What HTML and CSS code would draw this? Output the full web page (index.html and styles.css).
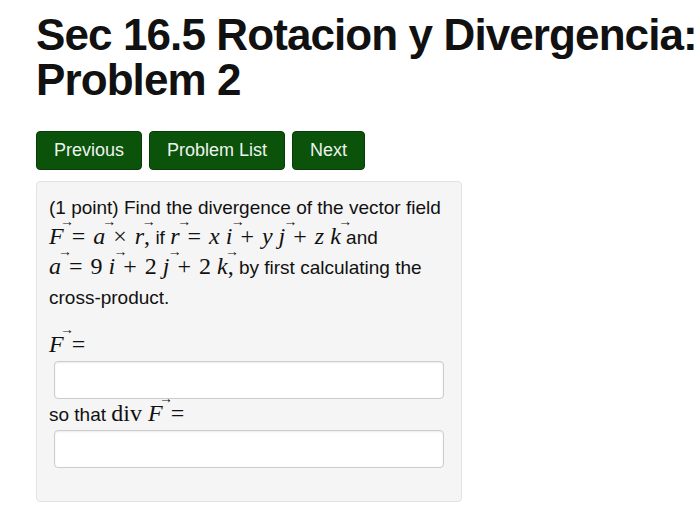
FILE: index.html
```html
<!DOCTYPE html>
<html>
<head>
  <title>Sec 16.5 Rotacion y Divergencia: Problem 2</title>
  <link rel="stylesheet" href="styles.css">
</head>
<body>
  <h1 class="title">Sec 16.5 Rotacion y Divergencia:<br>Problem 2</h1>

  <div class="nav">
    <a class="btn" href="#">Previous</a>
    <a class="btn" href="#">Problem List</a>
    <a class="btn" href="#">Next</a>
  </div>

  <div class="problem">
    <p class="text">(1 point) Find the divergence of the vector field
      <span class="m"><span class="vec">F</span><span class="op">=</span><span class="vec">a</span><span class="op">×</span><span class="vec">r</span>,</span> if
      <span class="m"><span class="vec">r</span><span class="op">=</span><i>x</i> <span class="vec">i</span><span class="op">+</span><i>y</i> <span class="vec">j</span><span class="op">+</span><i>z</i> <span class="vec">k</span></span> and
      <span class="m"><span class="vec">a</span><span class="op">=</span>9 <span class="vec">i</span><span class="op">+</span>2 <span class="vec">j</span><span class="op">+</span>2 <span class="vec">k</span>,</span> by first calculating the cross-product.</p>

    <p class="label"><span class="m"><span class="vec">F</span><span class="op">=</span></span></p>
    <input class="answer" type="text">

    <p class="label">so that <span class="m">div <span class="vec">F</span><span class="op">=</span></span></p>
    <input class="answer" type="text">
  </div>
</body>
</html>
```

FILE: styles.css
```css
body {
  margin: 0;
  padding: 0 36px;
  font-family: 'Liberation Sans', Arial, sans-serif;
  color: #111;
  background: #fff;
}
.title {
  margin: 12px 0 0;
  font-size: 44px;
  line-height: 45px;
  letter-spacing: -0.9px;
  font-weight: bold;
  white-space: nowrap;
}
.nav {
  display: flex;
  gap: 7px;
  margin-top: 29px;
}
.btn {
  display: block;
  padding: 0 17px;
  height: 37px;
  line-height: 37px;
  font-size: 18px;
  color: #eef3ee;
  text-decoration: none;
  background: #0b520b;
  border: 1px solid #083d08;
  border-radius: 4px;
}
.problem {
  margin-top: 11px;
  width: 400px;
  padding: 11px 12px 33px;
  background: #f5f5f5;
  border: 1px solid #e3e3e3;
  border-radius: 4px;
}
.text {
  margin: 0 0 17px;
  font-size: 19px;
  line-height: 30px;
}
.m {
  font-family: 'Liberation Serif', 'Times New Roman', serif;
  font-size: 24px;
  line-height: 20px;
  white-space: nowrap;
}
.m .op {
  margin: 0 8px;
  font-style: normal;
}
.m .vec {
  position: relative;
  font-style: italic;
}
.m .vec::after {
  content: "\2192";
  position: absolute;
  left: 75%;
  top: -11px;
  font-style: normal;
  font-size: 14px;
}
.label {
  margin: 0;
  font-size: 19px;
  line-height: 31px;
}
.answer {
  display: block;
  box-sizing: border-box;
  width: calc(100% - 10px);
  height: 38px;
  margin: 0 5px;
  background: #fff;
  border: 1px solid #ccc;
  border-radius: 4px;
  box-shadow: inset 0 1px 2px rgba(0, 0, 0, 0.08);
}
```
